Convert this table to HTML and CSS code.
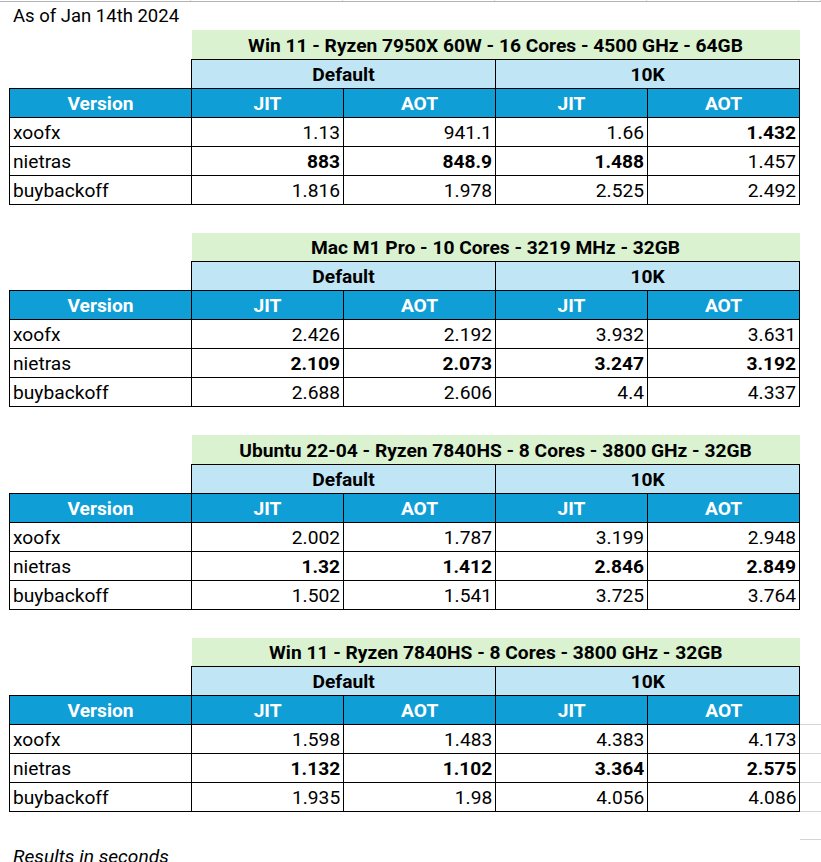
FILE: index.html
```html
<!DOCTYPE html>
<html lang="en">
<head>
<meta charset="utf-8">
<title>Benchmark results</title>
<link rel="stylesheet" href="styles.css">
</head>
<body>
<div class="sheet">
  <div class="topline"><span class="tk"></span><span class="tk"></span><span class="tk"></span><span class="tk"></span><span class="tk"></span><span class="tk"></span></div>
  <div class="title">As of Jan 14th 2024</div>

  <table class="bench">
    <colgroup><col class="c-name"><col class="c-num"><col class="c-num"><col class="c-num"><col class="c-num"></colgroup>
    <tr class="r-sys"><td class="blank"></td><td colspan="4" class="sys">Win 11 - Ryzen 7950X 60W - 16 Cores - 4500 GHz - 64GB</td></tr>
    <tr class="r-mode"><td class="blank"></td><td colspan="2" class="mode">Default</td><td colspan="2" class="mode">10K</td></tr>
    <tr class="r-head"><th>Version</th><th>JIT</th><th>AOT</th><th>JIT</th><th>AOT</th></tr>
    <tr><td class="name">xoofx</td><td class="num">1.13</td><td class="num">941.1</td><td class="num">1.66</td><td class="num b">1.432</td></tr>
    <tr><td class="name">nietras</td><td class="num b">883</td><td class="num b">848.9</td><td class="num b">1.488</td><td class="num">1.457</td></tr>
    <tr><td class="name">buybackoff</td><td class="num">1.816</td><td class="num">1.978</td><td class="num">2.525</td><td class="num">2.492</td></tr>
  </table>
  <div class="gap"></div>

  <table class="bench">
    <colgroup><col class="c-name"><col class="c-num"><col class="c-num"><col class="c-num"><col class="c-num"></colgroup>
    <tr class="r-sys"><td class="blank"></td><td colspan="4" class="sys">Mac M1 Pro - 10 Cores - 3219 MHz - 32GB</td></tr>
    <tr class="r-mode"><td class="blank"></td><td colspan="2" class="mode">Default</td><td colspan="2" class="mode">10K</td></tr>
    <tr class="r-head"><th>Version</th><th>JIT</th><th>AOT</th><th>JIT</th><th>AOT</th></tr>
    <tr><td class="name">xoofx</td><td class="num">2.426</td><td class="num">2.192</td><td class="num">3.932</td><td class="num">3.631</td></tr>
    <tr><td class="name">nietras</td><td class="num b">2.109</td><td class="num b">2.073</td><td class="num b">3.247</td><td class="num b">3.192</td></tr>
    <tr><td class="name">buybackoff</td><td class="num">2.688</td><td class="num">2.606</td><td class="num">4.4</td><td class="num">4.337</td></tr>
  </table>
  <div class="gap"></div>

  <table class="bench">
    <colgroup><col class="c-name"><col class="c-num"><col class="c-num"><col class="c-num"><col class="c-num"></colgroup>
    <tr class="r-sys"><td class="blank"></td><td colspan="4" class="sys">Ubuntu 22-04 - Ryzen 7840HS - 8 Cores - 3800 GHz - 32GB</td></tr>
    <tr class="r-mode"><td class="blank"></td><td colspan="2" class="mode">Default</td><td colspan="2" class="mode">10K</td></tr>
    <tr class="r-head"><th>Version</th><th>JIT</th><th>AOT</th><th>JIT</th><th>AOT</th></tr>
    <tr><td class="name">xoofx</td><td class="num">2.002</td><td class="num">1.787</td><td class="num">3.199</td><td class="num">2.948</td></tr>
    <tr><td class="name">nietras</td><td class="num b">1.32</td><td class="num b">1.412</td><td class="num b">2.846</td><td class="num b">2.849</td></tr>
    <tr><td class="name">buybackoff</td><td class="num">1.502</td><td class="num">1.541</td><td class="num">3.725</td><td class="num">3.764</td></tr>
  </table>
  <div class="gap"></div>

  <table class="bench wide">
    <colgroup><col class="c-name"><col class="c-num"><col class="c-num"><col class="c-num"><col class="c-num"><col class="c-extra"></colgroup>
    <tr class="r-sys"><td class="blank"></td><td colspan="4" class="sys">Win 11 - Ryzen 7840HS - 8 Cores - 3800 GHz - 32GB</td><td class="blank"></td></tr>
    <tr class="r-mode"><td class="blank"></td><td colspan="2" class="mode">Default</td><td colspan="2" class="mode">10K</td><td class="blank"></td></tr>
    <tr class="r-head"><th>Version</th><th>JIT</th><th>AOT</th><th>JIT</th><th>AOT</th><td class="grid"></td></tr>
    <tr><td class="name">xoofx</td><td class="num">1.598</td><td class="num">1.483</td><td class="num">4.383</td><td class="num">4.173</td><td class="grid"></td></tr>
    <tr><td class="name">nietras</td><td class="num b">1.132</td><td class="num b">1.102</td><td class="num b">3.364</td><td class="num b">2.575</td><td class="grid"></td></tr>
    <tr><td class="name">buybackoff</td><td class="num">1.935</td><td class="num">1.98</td><td class="num">4.056</td><td class="num">4.086</td><td class="grid"></td></tr>
  </table>
  <div class="gap gap-line"></div>

  <div class="note">Results in seconds</div>
</div>
</body>
</html>
```

FILE: styles.css
```css
html, body {
  margin: 0;
  padding: 0;
  background: #ffffff;
  overflow: hidden;
}

.sheet {
  width: 821px;
  font-family: Roboto, "Liberation Sans", sans-serif;
  font-size: 19.2px;
  color: #000000;
}

.topline {
  display: grid;
  grid-template-columns: 191px 152px 152px 152px 152px 22px;
  height: 1px;
  border-bottom: 1px solid #b4b4b4;
}

.tk {
  border-right: 1px solid #d8d8d8;
}

.title {
  font-size: 18.5px;
  line-height: 22px;
  height: 28px;
  box-sizing: border-box;
  padding: 0 0 3px 13px;
  display: flex;
  align-items: flex-end;
}

.bench {
  border-collapse: collapse;
  table-layout: fixed;
  width: 791px;
  margin-left: 9px;
}

.bench.wide {
  width: 813px;
}

.c-name { width: 182px; }
.c-num { width: 152px; }
.c-extra { width: 22px; }

.bench tr {
  height: 29px;
}

.bench td,
.bench th {
  padding: 0 3px 2px 3px;
  line-height: 22px;
  vertical-align: bottom;
  white-space: nowrap;
  overflow: hidden;
}

.blank {
  border: none;
}

.sys {
  background: #daf2d0;
  font-weight: 700;
  text-align: center;
}

.mode {
  background: #c0e6f5;
  font-weight: 700;
  text-align: center;
  border: 1px solid #000000;
}

.r-head th {
  background: #0f9ed5;
  color: #ffffff;
  font-weight: 700;
  text-align: center;
  border: 1px solid #000000;
}

.name {
  text-align: left;
  border: 1px solid #000000;
}

.num {
  text-align: right;
  border: 1px solid #000000;
}

.b {
  font-weight: 700;
}

.bench .grid {
  border-bottom: 1px solid #d4d4d4;
}

.gap {
  height: 28px;
}

.gap-line {
  display: flex;
  justify-content: flex-end;
}

.gap-line::after {
  content: "";
  width: 21px;
  border-bottom: 1px solid #d4d4d4;
}

.note {
  height: 29px;
  padding: 6px 0 0 13px;
  font-style: italic;
  line-height: 22px;
  box-sizing: border-box;
}
```
